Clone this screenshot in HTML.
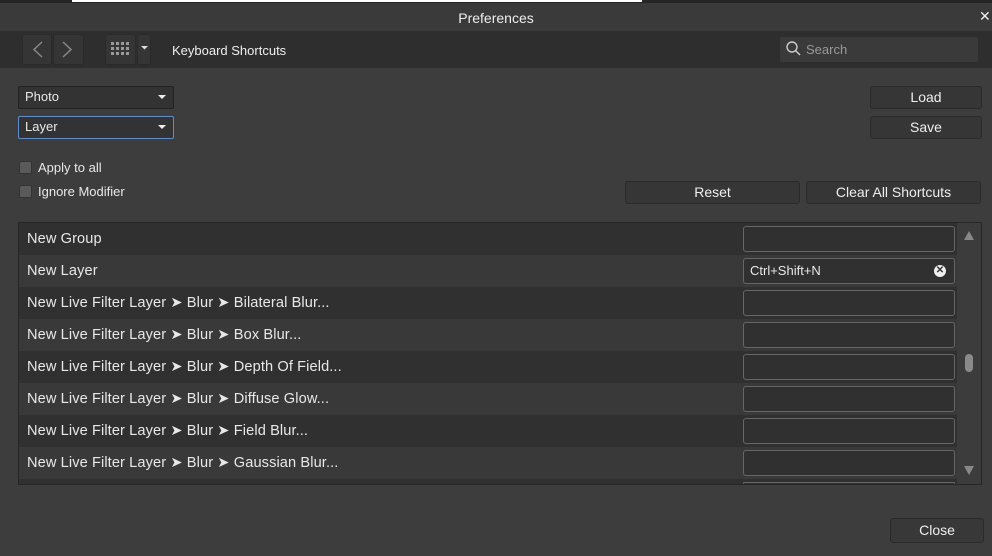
<!DOCTYPE html>
<html><head><meta charset="utf-8"><style>
*{box-sizing:border-box;margin:0;padding:0}
body{width:992px;height:556px;overflow:hidden;background:#3d3d3d;font-family:"Liberation Sans",sans-serif;color:#e8e8e8;font-size:14px;position:relative}
.abs{position:absolute}
.btn{position:absolute;background:#363636;border:1px solid #2a2a2a;border-radius:3px;color:#eee;font-size:14px;text-align:center}
.dd{position:absolute;background:#333;border:1px solid #222;border-radius:2px;font-size:13px;padding-left:6px;line-height:20px}
.dd:after{content:"";position:absolute;right:7px;top:8px;border-left:4px solid transparent;border-right:4px solid transparent;border-top:4px solid #eee}
.cb{position:absolute;width:13px;height:13px;background:#5a5a5a;border:1px solid #333;border-radius:2px}
.row{position:absolute;left:19px;width:938px;height:32px;font-size:14.6px;letter-spacing:0.1px;line-height:32px;padding-left:8px}
.inp{position:absolute;left:743px;width:212px;height:26px;border:1px solid #666;border-radius:3px;background:#303030}
</style></head><body>
<div class="abs" style="left:0;top:0;width:992px;height:3px;background:#262626"></div>
<div class="abs" style="left:72px;top:0;width:570px;height:2px;background:#fff"></div>
<div class="abs" style="left:0;top:3px;width:992px;height:28px;background:#3a3a3a"></div>
<div class="abs" style="left:0;top:10px;width:992px;text-align:center;font-size:14px;color:#eee">Preferences</div>
<div class="abs" style="left:979px;top:8px;font-size:14px;color:#eee">✕</div>
<div class="abs" style="left:0;top:31px;width:992px;height:37px;background:#2e2e2e"></div>
<div class="btn" style="left:22px;top:34px;width:30px;height:31px;background:#353535;border-color:#2a2a2a"></div>
<div class="btn" style="left:53px;top:34px;width:31px;height:31px;background:#353535"></div>
<svg class="abs" style="left:22px;top:34px" width="62" height="31"><path d="M20 8 L12 15.5 L20 23" stroke="#888" fill="none" stroke-width="1.5"/><path d="M41 8 L49 15.5 L41 23" stroke="#888" fill="none" stroke-width="1.5"/></svg>
<div class="btn" style="left:105px;top:34px;width:31px;height:31px;background:#353535"></div>
<div class="btn" style="left:137px;top:34px;width:14px;height:31px;background:#353535"></div>
<svg class="abs" style="left:105px;top:34px" width="46" height="31"><g fill="#999"><rect x="6" y="8" width="3" height="3"/><rect x="11" y="8" width="3" height="3"/><rect x="16" y="8" width="3" height="3"/><rect x="21" y="8" width="3" height="3"/><rect x="6" y="13" width="3" height="3"/><rect x="11" y="13" width="3" height="3"/><rect x="16" y="13" width="3" height="3"/><rect x="21" y="13" width="3" height="3"/><rect x="6" y="18" width="3" height="3"/><rect x="11" y="18" width="3" height="3"/><rect x="16" y="18" width="3" height="3"/><rect x="21" y="18" width="3" height="3"/></g><path d="M36 12 h7 l-3.5 3.5z" fill="#ddd"/></svg>
<div class="abs" style="left:172px;top:43px;font-size:13px;color:#eee">Keyboard Shortcuts</div>
<div class="abs" style="left:780px;top:37px;width:198px;height:25px;background:#3a3a3a;border-radius:2px"></div>
<svg class="abs" style="left:785px;top:40px" width="18" height="18"><circle cx="7" cy="7" r="5" stroke="#ccc" stroke-width="1.4" fill="none"/><path d="M10.5 10.5 L15 15" stroke="#ccc" stroke-width="1.5"/></svg>
<div class="abs" style="left:806px;top:42px;font-size:13px;color:#999">Search</div>

<div class="dd" style="left:18px;top:86px;width:156px;height:23px">Photo</div>
<div class="dd" style="left:18px;top:116px;width:156px;height:23px;border-color:#5f8ccb">Layer</div>
<div class="cb" style="left:19px;top:161px"></div>
<div class="abs" style="left:38px;top:160px;font-size:13px">Apply to all</div>
<div class="cb" style="left:19px;top:185px"></div>
<div class="abs" style="left:38px;top:184px;font-size:13px">Ignore Modifier</div>

<div class="btn" style="left:870px;top:86px;width:112px;height:23px;line-height:21px">Load</div>
<div class="btn" style="left:870px;top:116px;width:112px;height:23px;line-height:21px">Save</div>
<div class="btn" style="left:625px;top:181px;width:175px;height:23px;line-height:21px">Reset</div>
<div class="btn" style="left:806px;top:181px;width:175px;height:23px;line-height:21px">Clear All Shortcuts</div>

<div class="abs" style="left:18px;top:222px;width:964px;height:263px;background:#353535;border:1px solid #262626;overflow:hidden">
</div>
<div class="abs" style="left:19px;top:223px;width:938px;height:261px;overflow:hidden">
<div class="row" style="left:0;top:0;background:#303030">New Group</div>
<div class="row" style="left:0;top:32px;background:#393939">New Layer</div>
<div class="row" style="left:0;top:64px;background:#303030">New Live Filter Layer ➤ Blur ➤ Bilateral Blur...</div>
<div class="row" style="left:0;top:96px;background:#393939">New Live Filter Layer ➤ Blur ➤ Box Blur...</div>
<div class="row" style="left:0;top:128px;background:#303030">New Live Filter Layer ➤ Blur ➤ Depth Of Field...</div>
<div class="row" style="left:0;top:160px;background:#393939">New Live Filter Layer ➤ Blur ➤ Diffuse Glow...</div>
<div class="row" style="left:0;top:192px;background:#303030">New Live Filter Layer ➤ Blur ➤ Field Blur...</div>
<div class="row" style="left:0;top:224px;background:#393939">New Live Filter Layer ➤ Blur ➤ Gaussian Blur...</div>
<div class="row" style="left:0;top:256px;background:#303030"></div>
</div>
<div class="inp" style="top:226px"></div>
<div class="inp" style="top:258px;font-size:13px;line-height:24px;padding-left:6px">Ctrl+Shift+N<span style="position:absolute;right:8px;top:6px;width:12px;height:12px;border-radius:6px;background:#eee;color:#333;font-size:10px;line-height:12px;text-align:center;font-weight:bold">✕</span></div>
<div class="inp" style="top:290px"></div>
<div class="inp" style="top:322px"></div>
<div class="inp" style="top:354px"></div>
<div class="inp" style="top:386px"></div>
<div class="inp" style="top:418px"></div>
<div class="inp" style="top:450px"></div>
<div class="inp" style="top:482px;height:2px;border-bottom:none"></div>
<div class="abs" style="left:957px;top:223px;width:24px;height:261px;background:#3c3c3c"></div>
<svg class="abs" style="left:957px;top:223px" width="24" height="261"><path d="M7 17 L12 8 L17 17z" fill="#888"/><rect x="8" y="131" width="8" height="18" rx="4" fill="#8a8a8a"/><path d="M7 243 L12 252 L17 243z" fill="#888"/></svg>

<div class="btn" style="left:890px;top:518px;width:94px;height:25px;line-height:23px;background:#383838">Close</div>
</body></html>
